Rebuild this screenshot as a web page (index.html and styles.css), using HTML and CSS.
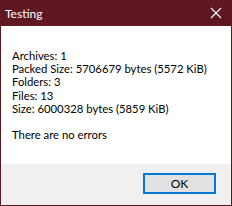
FILE: index.html
```html
<!DOCTYPE html>
<html lang="en">
  <head>
    <meta charset="UTF-8" />
    <title>Testing</title>
    <link rel="stylesheet" href="styles.css">
  </head>
  <body>
    <div class="window">
      <div class="titlebar">
        <span class="title">Testing</span>
        <svg class="close" width="12" height="12" viewBox="0 0 12 12">
          <path d="M1 1 L11 11 M11 1 L1 11" stroke="#fff" stroke-width="1.1" fill="none" />
        </svg>
      </div>
      <div class="content">
        <div class="line">Archives: 1</div>
        <div class="line">Packed Size: 5706679 bytes (5572 KiB)</div>
        <div class="line">Folders: 3</div>
        <div class="line">Files: 13</div>
        <div class="line">Size: 6000328 bytes (5859 KiB)</div>
        <div class="line gap">There are no errors</div>
      </div>
      <div class="footer">
        <button class="ok">OK</button>
      </div>
    </div>
  </body>
</html>
```

FILE: styles.css
```css
body {
  margin: 0;
  font-family: Lato, "Noto Sans", sans-serif;
  font-size: 12px;
}

.window {
  width: 232px;
  height: 206px;
  box-sizing: border-box;
  border: 1px solid #5f1722;
  border-top: none;
  display: flex;
  flex-direction: column;
  background-color: #fff;
}

.titlebar {
  height: 26px;
  flex-shrink: 0;
  background-color: #5f1722;
  display: flex;
  align-items: center;
  justify-content: space-between;
  padding: 0 9px 0 4px;
  color: #fff;
}

.content {
  flex: 1;
  padding: 23px 11px 0;
  font-size: 11.3px;
  color: #000;
}

.line {
  height: 13.2px;
  line-height: 13.2px;
  white-space: nowrap;
}

.gap {
  margin-top: 13.2px;
}

.footer {
  height: 41px;
  flex-shrink: 0;
  background-color: #f0f0f0;
  display: flex;
  justify-content: flex-end;
  align-items: flex-start;
  padding: 9px 15px 0 0;
  box-sizing: border-box;
}

.ok {
  width: 73px;
  height: 21px;
  border: 2px solid #0078d7;
  background-color: #e1e1e1;
  font-family: inherit;
  font-size: 12px;
  color: #000;
  padding: 0;
}
```
